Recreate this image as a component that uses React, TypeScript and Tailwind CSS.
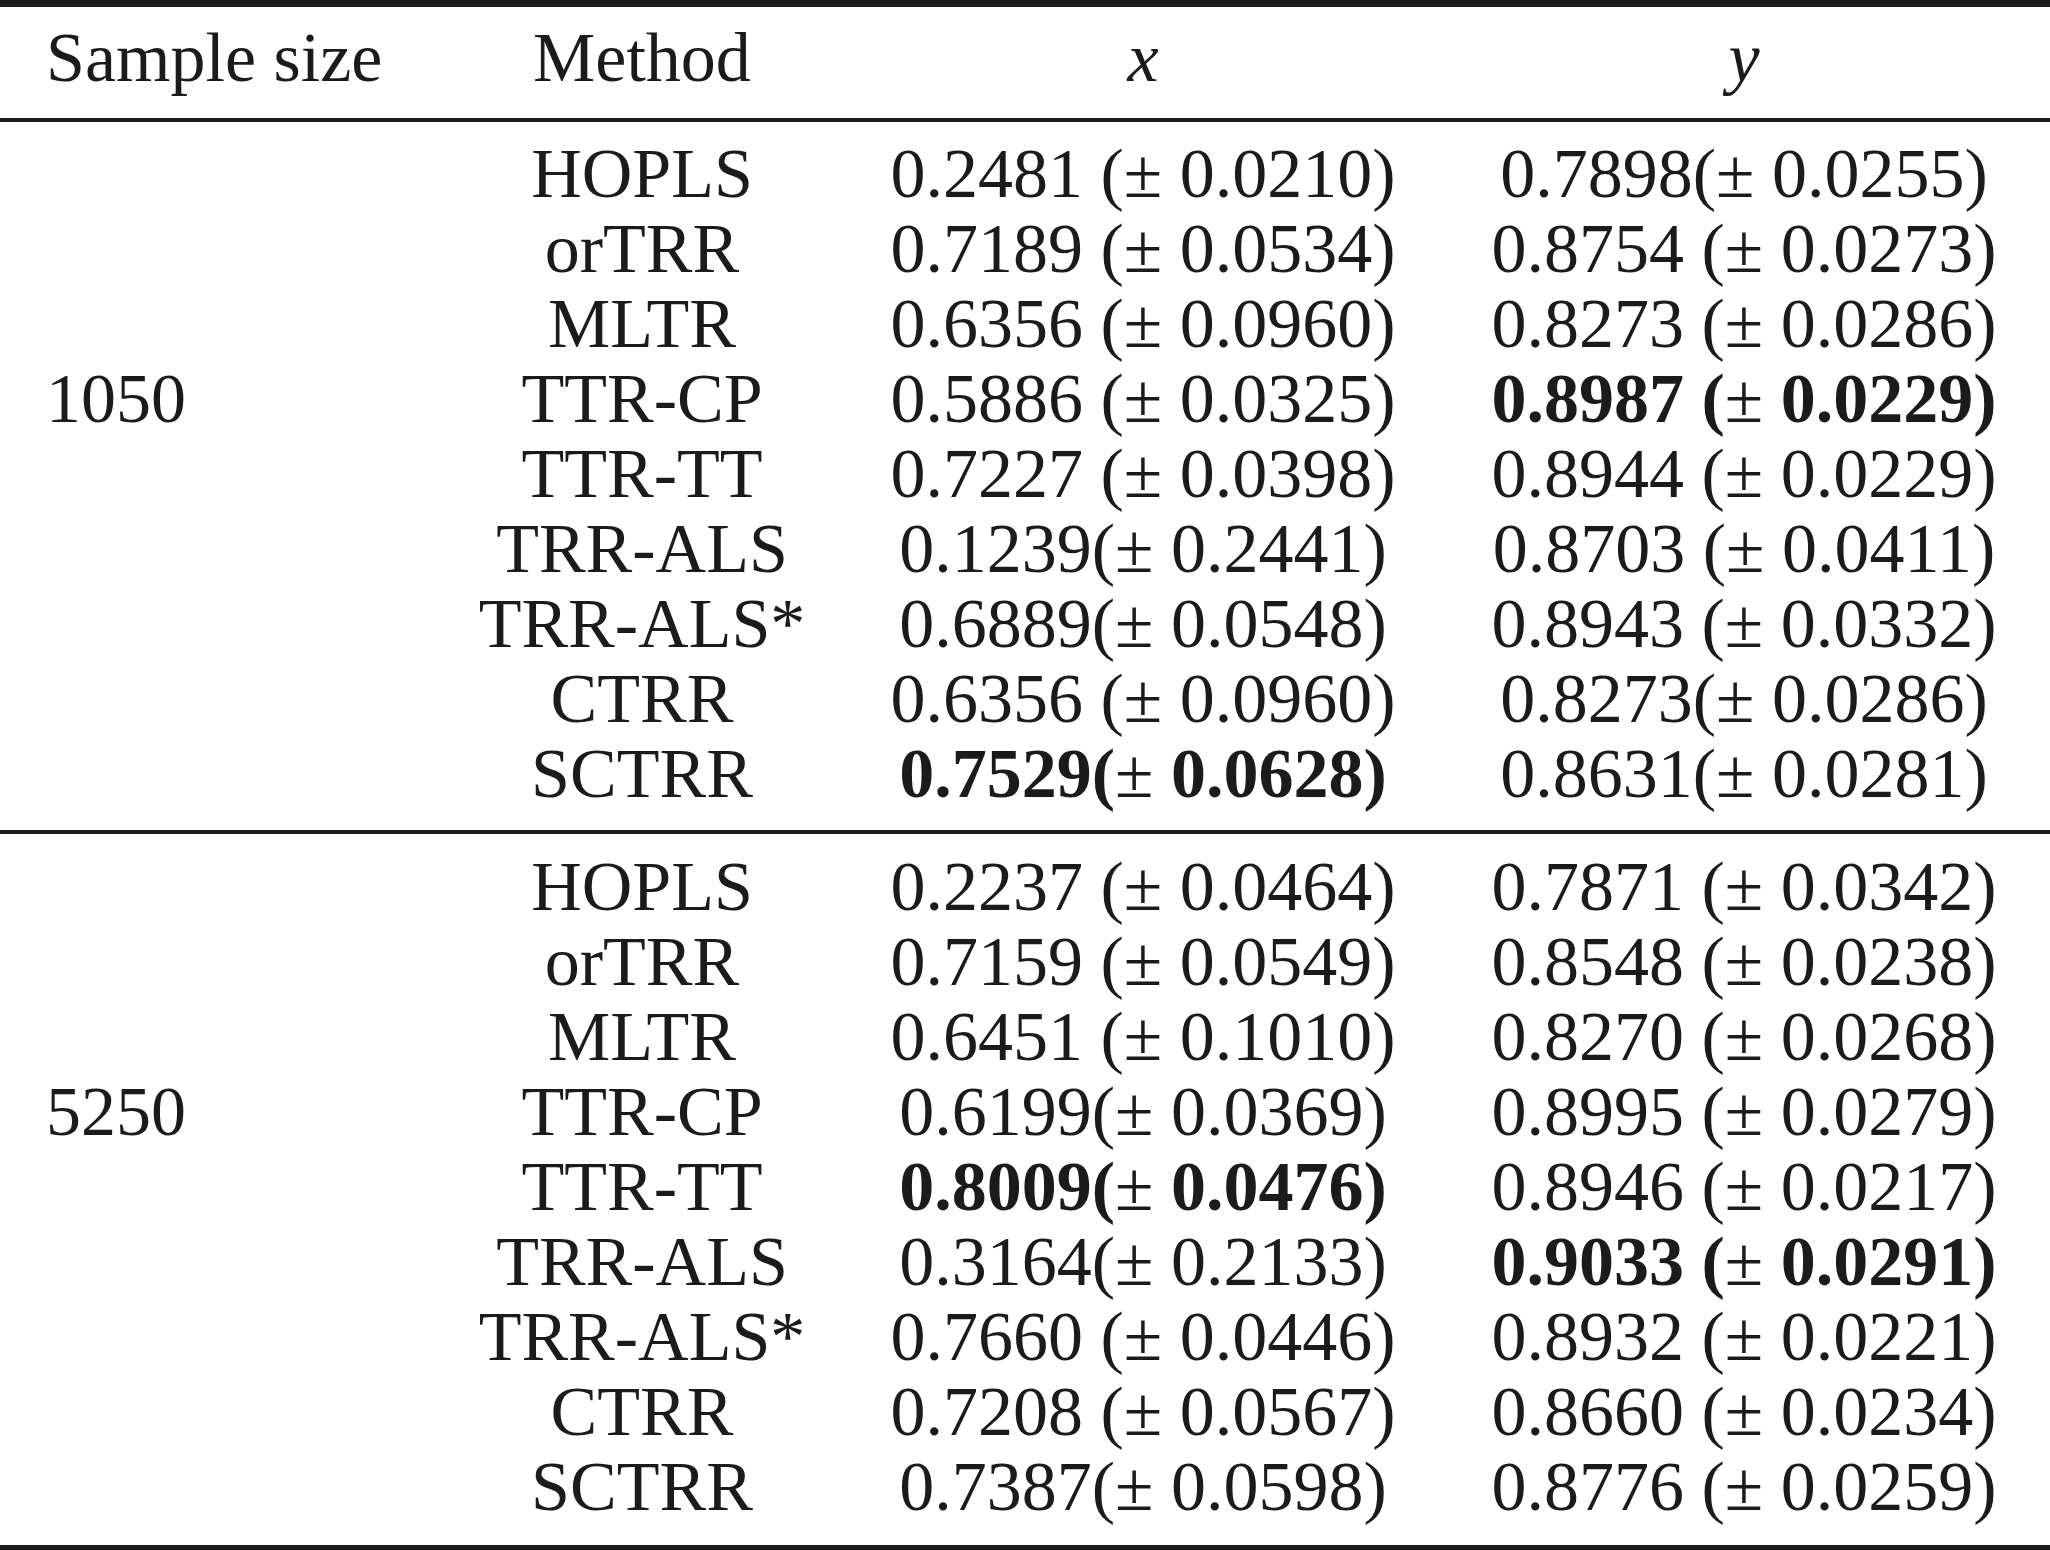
type Cell = { v: string; b?: boolean }

interface Block {
  size: string
  rows: [string, Cell, Cell][]
}

const blocks: Block[] = [
  {
    size: "1050",
    rows: [
      ["HOPLS", { v: "0.2481 (± 0.0210)" }, { v: "0.7898(± 0.0255)" }],
      ["orTRR", { v: "0.7189 (± 0.0534)" }, { v: "0.8754 (± 0.0273)" }],
      ["MLTR", { v: "0.6356 (± 0.0960)" }, { v: "0.8273 (± 0.0286)" }],
      ["TTR-CP", { v: "0.5886 (± 0.0325)" }, { v: "0.8987 (± 0.0229)", b: true }],
      ["TTR-TT", { v: "0.7227 (± 0.0398)" }, { v: "0.8944 (± 0.0229)" }],
      ["TRR-ALS", { v: "0.1239(± 0.2441)" }, { v: "0.8703 (± 0.0411)" }],
      ["TRR-ALS*", { v: "0.6889(± 0.0548)" }, { v: "0.8943 (± 0.0332)" }],
      ["CTRR", { v: "0.6356 (± 0.0960)" }, { v: "0.8273(± 0.0286)" }],
      ["SCTRR", { v: "0.7529(± 0.0628)", b: true }, { v: "0.8631(± 0.0281)" }],
    ],
  },
  {
    size: "5250",
    rows: [
      ["HOPLS", { v: "0.2237 (± 0.0464)" }, { v: "0.7871 (± 0.0342)" }],
      ["orTRR", { v: "0.7159 (± 0.0549)" }, { v: "0.8548 (± 0.0238)" }],
      ["MLTR", { v: "0.6451 (± 0.1010)" }, { v: "0.8270 (± 0.0268)" }],
      ["TTR-CP", { v: "0.6199(± 0.0369)" }, { v: "0.8995 (± 0.0279)" }],
      ["TTR-TT", { v: "0.8009(± 0.0476)", b: true }, { v: "0.8946 (± 0.0217)" }],
      ["TRR-ALS", { v: "0.3164(± 0.2133)" }, { v: "0.9033 (± 0.0291)", b: true }],
      ["TRR-ALS*", { v: "0.7660 (± 0.0446)" }, { v: "0.8932 (± 0.0221)" }],
      ["CTRR", { v: "0.7208 (± 0.0567)" }, { v: "0.8660 (± 0.0234)" }],
      ["SCTRR", { v: "0.7387(± 0.0598)" }, { v: "0.8776 (± 0.0259)" }],
    ],
  },
]

const cols = "grid grid-cols-[436px_412px_590px_612px]"

function Value({ cell }: { cell: Cell }) {
  if (!cell.b) return <span>{cell.v}</span>
  const [head, tail] = cell.v.split("±")
  return (
    <span className="font-bold">
      {head}
      <span className="font-normal">±</span>
      {tail}
    </span>
  )
}

export default function App() {
  return (
    <div
      className="w-[2050px] h-[1550px] bg-white text-[#1c1a1b] text-[70px] leading-[75px]"
      style={{ fontFamily: '"Liberation Serif", "Times New Roman", serif' }}
    >
      <div className="h-[7px] bg-[#1c1a1b]" />

      {/* header */}
      <div className={`${cols} pt-[13px] pb-[23px]`}>
        <div className="pl-[46px]">Sample size</div>
        <div className="text-center">Method</div>
        <div className="text-center italic">x</div>
        <div className="text-center italic">y</div>
      </div>
      <div className="h-[4px] bg-[#1c1a1b]" />

      {blocks.map((block, bi) => (
        <div key={block.size}>
          <div
            className={`${cols} ${bi === 0 ? "pt-[14px] pb-[19px]" : "pt-[15px] pb-[21px]"}`}
          >
            {block.rows.map(([method, x, y], i) => (
              <div key={method} className="contents">
                <div className="pl-[46px]">{i === 3 ? block.size : ""}</div>
                <div className="text-center">{method}</div>
                <div className="text-center">
                  <Value cell={x} />
                </div>
                <div className="text-center">
                  <Value cell={y} />
                </div>
              </div>
            ))}
          </div>
          <div className={bi === 0 ? "h-[4px] bg-[#1c1a1b]" : "h-[7px] bg-[#1c1a1b]"} />
        </div>
      ))}
    </div>
  )
}
